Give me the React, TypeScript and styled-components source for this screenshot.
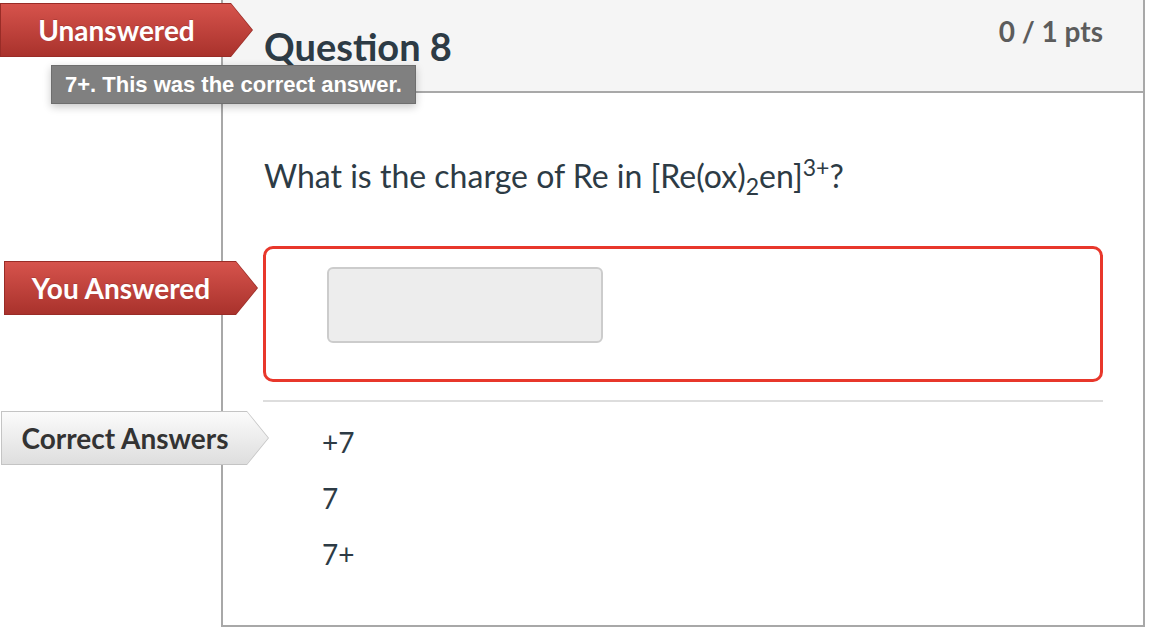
import React from 'react'
import styled, { createGlobalStyle, css } from 'styled-components'

//Global
const GlobalStyle = createGlobalStyle`
  html, body {
    margin: 0;
    padding: 0;
    background: #ffffff;
  }
  body {
    font-family: Lato, 'Open Sans', sans-serif;
    color: #2d3b45;
  }
`

//Styled Components
const Page = styled.div`
  width: 1160px;
  height: 632px;
  overflow: hidden;
`

const Panel = styled.section`
  position: relative;
  margin-left: 221px;
  width: 920px;
  height: 625px;
  border: 2px solid #a8a8a8;
  border-top: none;
  display: flex;
  flex-direction: column;
`

const Header = styled.header`
  height: 91px;
  flex-shrink: 0;
  background: #f5f5f5;
  border-bottom: 2px solid #a8a8a8;
  display: flex;
  justify-content: space-between;
  align-items: flex-start;
  padding: 0 40px 0 41px;
`

const Title = styled.h2`
  margin: 22px 0 0;
  font-size: 38px;
  font-weight: 700;
  line-height: 48px;
  color: #2d3b45;
`

const Points = styled.div`
  margin-top: 12px;
  font-size: 28px;
  font-weight: 700;
  line-height: 38px;
  color: #5c5c5c;
`

const Body = styled.div`
  padding: 0 40px 0 40px;
  display: flex;
  flex-direction: column;
`

const QuestionText = styled.p`
  margin: 63px 0 0 1px;
  font-size: 32px;
  line-height: 40px;
  color: #2d3b45;

  sub,
  sup {
    font-size: 23px;
    line-height: 0;
  }
`

const AnswerBox = styled.div`
  box-sizing: border-box;
  margin-top: 50px;
  height: 136px;
  border: 3px solid #e8372b;
  border-radius: 10px;
  padding: 18px 61px 0;
`

const BlankInput = styled.div`
  width: 272px;
  height: 72px;
  background: #ededed;
  border: 2px solid #cccccc;
  border-radius: 6px;
`

const Divider = styled.hr`
  margin: 18px 0 0;
  border: none;
  height: 2px;
  background: #dddddd;
`

const AnswerList = styled.div`
  margin-top: 12px;
  padding-left: 59px;
  display: flex;
  flex-direction: column;
`

const AnswerItem = styled.div`
  font-size: 28px;
  line-height: 56px;
  color: #2d3b45;
`

const redArrow = css`
  color: #ffffff;
  background: linear-gradient(#d6534c, #a9322c);
  text-shadow: 0 -1px 0 rgba(0, 0, 0, 0.15);
`

const greyArrow = css`
  color: #333333;
  background: linear-gradient(#fbfbfb, #dedede);
`

type Tone = 'red' | 'grey'

const Arrow = styled.div<{ $left: number; $top: number; $width: number; $tone: Tone }>`
  position: absolute;
  left: ${({ $left }) => $left}px;
  top: ${({ $top }) => $top}px;
  width: ${({ $width }) => $width}px;
  height: 52px;
  box-sizing: border-box;
  padding-right: 20px;
  display: flex;
  align-items: center;
  justify-content: center;
  font-size: 28px;
  font-weight: 700;
  clip-path: polygon(0 0, calc(100% - 21px) 0, 100% 50%, calc(100% - 21px) 100%, 0 100%);
  ${({ $tone }) => ($tone === 'red' ? redArrow : greyArrow)}
  z-index: 2;
`

const ArrowEdge = styled.div<{ $left: number; $top: number; $width: number; $tone: Tone }>`
  position: absolute;
  left: ${({ $left }) => $left - 1}px;
  top: ${({ $top }) => $top - 1}px;
  width: ${({ $width }) => $width + 2}px;
  height: 54px;
  background: ${({ $tone }) => ($tone === 'red' ? '#992c27' : '#c4c4c4')};
  clip-path: polygon(0 0, calc(100% - 22px) 0, 100% 50%, calc(100% - 22px) 100%, 0 100%);
  z-index: 1;
`

const Tooltip = styled.div`
  position: absolute;
  left: -172px;
  top: 65px;
  width: 365px;
  height: 39px;
  box-sizing: border-box;
  display: flex;
  align-items: center;
  padding-left: 13px;
  background: #808080;
  border: 1px solid #6e6e6e;
  box-shadow: 0 3px 8px rgba(0, 0, 0, 0.22);
  color: #ffffff;
  font-family: 'Liberation Sans', Arial, sans-serif;
  font-size: 22px;
  font-weight: 700;
  white-space: nowrap;
  z-index: 3;
`

type BadgeProps = {
  label: string
  left: number
  top: number
  width: number
  tone: Tone
}

const Badge: React.FC<BadgeProps> = ({ label, left, top, width, tone }) => (
  <>
    <ArrowEdge $left={left} $top={top} $width={width} $tone={tone} />
    <Arrow $left={left} $top={top} $width={width} $tone={tone}>
      {label}
    </Arrow>
  </>
)

//React Component
const App: React.FC = () => {
  return (
    <Page>
      <GlobalStyle />
      <Panel>
        <Header>
          <Title>Question 8</Title>
          <Points>0 / 1 pts</Points>
        </Header>
        <Body>
          <QuestionText>
            What is the charge of Re in [Re(ox)<sub>2</sub>en]<sup>3+</sup>?
          </QuestionText>
          <AnswerBox>
            <BlankInput />
          </AnswerBox>
          <Divider />
          <AnswerList>
            <AnswerItem>+7</AnswerItem>
            <AnswerItem>7</AnswerItem>
            <AnswerItem>7+</AnswerItem>
          </AnswerList>
        </Body>

        <Badge label="Unanswered" left={-222} top={4} width={251} tone="red" />
        <Tooltip>7+. This was the correct answer.</Tooltip>
        <Badge label="You Answered" left={-218} top={262} width={252} tone="red" />
        <Badge label="Correct Answers" left={-221} top={412} width={266} tone="grey" />
      </Panel>
    </Page>
  )
}
export default App
